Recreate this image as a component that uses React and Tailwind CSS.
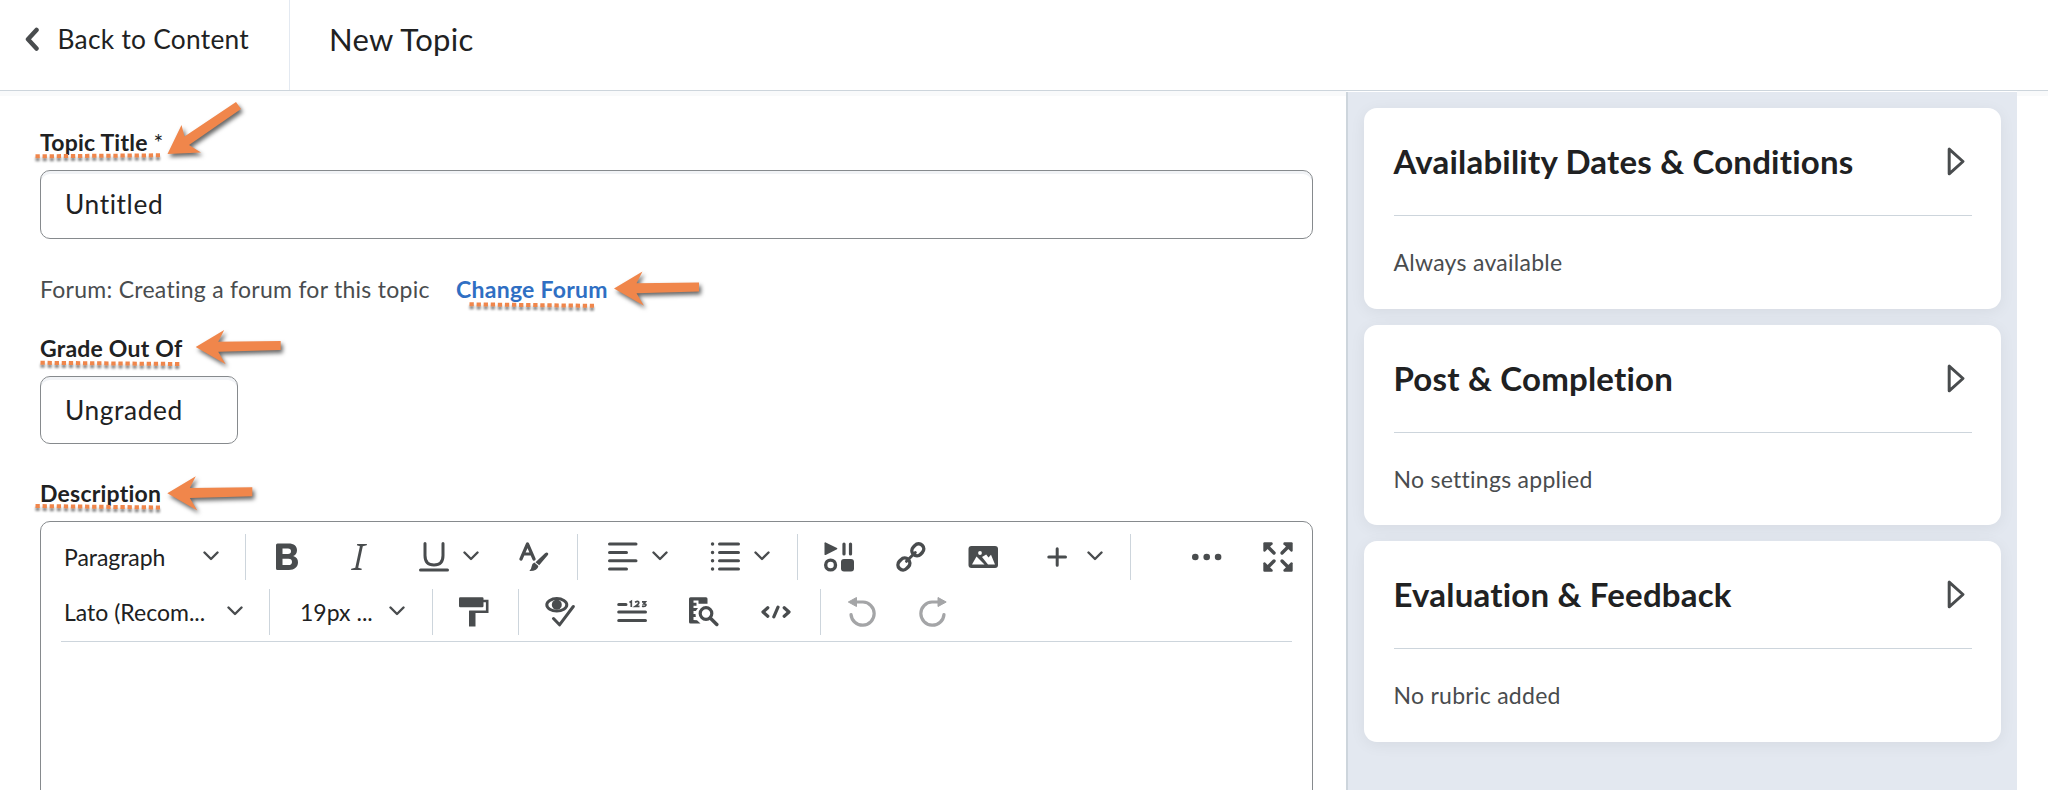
import React from "react";

const Icon = ({ className = "", w = 30, h = 30, children, color = "#494c4e" }) => (
  <svg className={"shrink-0 " + className} width={w} height={h} viewBox={`0 0 ${w} ${h}`} fill={color} stroke="none">
    {children}
  </svg>
);

const line = { fill: "none", stroke: "#494c4e", strokeWidth: 3, strokeLinecap: "round", strokeLinejoin: "round" };

const Chevron = ({ className = "" }) => (
  <Icon w={16} h={10} className={"-mt-[2px] " + className}>
    <path d="M1.5 1.5 8 8l6.5-6.5" {...line} strokeWidth={2.4} />
  </Icon>
);

const Sep = ({ className = "" }) => <span className={"h-[46px] w-px shrink-0 bg-[#cdd5dc] " + className} />;

const Label = ({ children, className = "" }) => (
  <div className={"h-[30px] whitespace-nowrap text-[23px] font-bold leading-[30px] tracking-[0.220px] text-[#202122] " + className}>{children}</div>
);

function ToolbarTop() {
  return (
    <div className="flex h-[46px] items-center pl-[23px]">
      <span className="w-[101px] shrink-0 whitespace-nowrap text-[23px] leading-[30px] tracking-[-0.050px]">Paragraph</span>
      <Chevron className="ml-[37.500px]" />
      <Sep className="ml-[26.500px]" />
      <Icon className="ml-[26px]">
        <path fillRule="evenodd" d="M5.500 1.500H16.500C22 1.500 25 4.200 25 8.300C25 11.200 23.500 13.200 21.200 14.100C24.300 15 26 17.200 26 20.300C26 25 22.500 28 17 28H5.500Q4 28 4 26.500V3Q4 1.500 5.500 1.500ZM10.500 6.500V12H16C18 12 19 11 19 9.200C19 7.500 18 6.500 16 6.500ZM10.500 16.800V23H16.500C18.800 23 20 22 20 19.900C20 17.900 18.800 16.800 16.500 16.800Z" />
      </Icon>
      <Icon className="ml-[42px]">
        <path d="M13.200 2H23L22.700 3.200L18.800 4.200L14.200 25.800L17.800 26.800L17.500 28H7L7.300 26.800L11.300 25.800L15.900 4.200L12.900 3.200Z" />
      </Icon>
      <Icon className="ml-[45px]">
        <path d="M6 1.500V13.500Q6 23 15 23Q24 23 24 13.500V1.500" {...line} />
        <path d="M1.500 28H28.500" {...line} />
      </Icon>
      <Chevron className="ml-[14px]" />
      <Icon className="ml-[40px]">
        <path d="M2 17 8.500 2 15 17M4.500 12H12.500" {...line} strokeWidth={3.2} />
        <path d="M27.400 10.600Q29.700 10.600 29.100 12.700L20.200 23.200L16.500 20.200L26 11.300ZM15.300 20.500L19.400 24Q18.600 29 11 29L10.500 28.500Q12.300 27.300 12.600 24.400Q12.900 21.400 15.300 20.500Z" />
      </Icon>
      <Sep className="ml-[28px]" />
      <Icon className="ml-[30px]">
        <path d="M1.500 2H28M1.500 10.500H18.500M1.500 18.700H28M1.500 27H18.500" {...line} />
      </Icon>
      <Chevron className="ml-[14px]" />
      <Icon className="ml-[42px]">
        <path d="M9.500 2H28.500M9.500 10.500H28.500M9.500 18.700H28.500M9.500 27H28.500" {...line} />
        <path d="M2.500 2h.1M2.500 10.500h.1M2.500 18.700h.1M2.500 27h.1" {...line} strokeWidth={3.400} />
      </Icon>
      <Chevron className="ml-[14px]" />
      <Sep className="ml-[27px]" />
      <Icon className="ml-[26px]">
        <path d="M.5 1.200Q.5 0 1.700.4L13 6.100Q13.800 6.700 13 7.300L1.700 13Q.5 13.300.5 12.200Z" />
        <path d="M20 2V12M26.500 2V12" {...line} strokeWidth={3.200} />
        <circle cx="6.600" cy="23" r="4.900" {...line} strokeWidth={3.400} />
        <rect x="17" y="17" width="13" height="12.500" rx="3" />
      </Icon>
      <Icon className="ml-[42px]">
        <g {...line} strokeWidth={3.500}>
          <rect x="-6.300" y="-5.100" width="12.600" height="10.200" rx="5.100" transform="translate(21.800 7.800) rotate(-46)" />
          <rect x="-6.300" y="-5.100" width="12.600" height="10.200" rx="5.100" transform="translate(7.900 22) rotate(-46)" />
          <path d="M10.500 19.300 19.300 10.500" strokeWidth={3} />
        </g>
      </Icon>
      <Icon className="ml-[42px]">
        <rect x=".5" y="4" width="29.500" height="22" rx="3" />
        <circle cx="12" cy="11" r="1.900" fill="#fff" />
        <path d="M4 22.500 8.500 14.500 16.500 22.500ZM14 15 18.200 12.500 20.500 15.500 23 12.800 27 22.500H20Z" fill="#fff" />
      </Icon>
      <Icon className="ml-[45px]">
        <path d="M5.800 15H22.500M14.200 6.700V23.200" {...line} />
      </Icon>
      <Chevron className="ml-[14px]" />
      <Sep className="ml-[27px]" />
      <Icon className="ml-[61px]">
        <circle cx="3.300" cy="15" r="3.300" />
        <circle cx="14.700" cy="15" r="3.300" />
        <circle cx="26.100" cy="15" r="3.300" />
      </Icon>
      <Icon className="ml-[41px]">
        {[0, 90, 180, 270].map((a) => (
          <g key={a} transform={`rotate(${a} 15 15)`}>
            <path d="M.3 1.500Q.3.300 1.500.300H8.700Q10.300.8 9.500 2.200L2.200 9.500Q.8 10.300.3 8.700Z" />
            <path d="M5 5 11 11" {...line} strokeWidth={3.400} />
          </g>
        ))}
      </Icon>
    </div>
  );
}

function ToolbarBottom() {
  const faded = { ...line, stroke: "#a4a5a7" };
  return (
    <div className="mt-[9px] flex h-[46px] items-center pl-[23px]">
      <span className="w-[142px] shrink-0 whitespace-nowrap text-[23px] leading-[30px]">Lato (Recom...</span>
      <Chevron className="ml-[21px]" />
      <Sep className="ml-[26px]" />
      <span className="ml-[30px] w-[75px] shrink-0 whitespace-nowrap text-[23px] leading-[30px]">19px ...</span>
      <Chevron className="ml-[14px]" />
      <Sep className="ml-[27px]" />
      <Icon className="ml-[26px]">
        <rect x="0" y=".3" width="24.500" height="10" rx="1.200" />
        <path d="M24 4H28.200V14.800H11.500V19" fill="none" stroke="#494c4e" strokeWidth="2.600" />
        <path d="M10 14H16.500V29.500H10Z" />
      </Icon>
      <Sep className="ml-[29px]" />
      <Icon className="ml-[26px]">
        <ellipse cx="11.800" cy="7.800" rx="10" ry="6.200" {...line} />
        <circle cx="11.800" cy="7.800" r="5" />
        <path d="M8.500 21.500 14.500 27.800 28.300 9.500" {...line} strokeWidth={3} />
      </Icon>
      <Icon className="ml-[42px]">
        <path d="M1.700 7.500H9M1.700 15H28.500M1.700 23.500H28.500" {...line} />
        <g fill="none" stroke="#494c4e" strokeWidth="1.700">
          <path d="M12.500 5.500 14.300 4.300V10M18 5.200Q21.800 3.300 21.800 5.800Q21.800 7 18.200 9.400H22.500M25 4.800H28.500L26.800 6.800Q29 6.800 29 8.100Q28.500 10 25 9.200" />
        </g>
      </Icon>
      <Icon className="ml-[42px]">
        <path d="M1.500.3H17Q18.500.3 18.500 1.800V6.800H9.500V3.600H4.500V5.800H7.500V8.800H4.500V11H9L6.800 14H4.500V17H6.500L6.800 20H4.500V23L8 23.300L11.500 26.500H1.500Q0 26.500 0 25V1.800Q0 .3 1.500.3Z" />
        <circle cx="17" cy="16.500" r="5.800" {...line} strokeWidth={3.200} />
        <path d="M21.500 21.300 27.800 27.500" {...line} strokeWidth={3.500} />
      </Icon>
      <Icon className="ml-[41.500px]">
        <path d="M6.800 10.700 2 15 6.800 19.300M23.200 10.700 28 15 23.200 19.300M17 10.200 12.800 19.800" {...line} strokeWidth={3.200} />
      </Icon>
      <Sep className="ml-[29.500px]" />
      <Icon className="ml-[27px]">
        <path d="M5 5H15A11.600 11.600 0 1 1 3 17.500" {...faded} strokeWidth={3.200} />
        <path d="M8.500.5V9.500L.3 5Z" fill="#a4a5a7" stroke="#a4a5a7" strokeLinejoin="round" />
      </Icon>
      <Icon className="ml-[40px]">
        <path d="M25 5H14A11.600 11.600 0 1 0 26 17.500" {...faded} strokeWidth={3.200} />
        <path d="M20 .5V9.500L28.200 5Z" fill="#a4a5a7" stroke="#a4a5a7" strokeLinejoin="round" />
      </Icon>
    </div>
  );
}

const Card = ({ title, text }) => (
  <section className="h-[200.500px] shrink-0 rounded-[13px] bg-white px-[29.500px] shadow-[0_3px_16px_rgba(0,0,0,0.06)]">
    <div className="flex h-[108px] items-start justify-between border-b border-[#cdd5dc] pt-[33px]">
      <h2 className="whitespace-nowrap text-[33px] font-bold leading-[40px] tracking-[0.210px]">{title}</h2>
      <svg className="mr-[6px] mt-[5px] shrink-0" width="19" height="31" viewBox="0 0 19 31">
        <path d="M2.200 3.200V27.800L16 15.500Z" fill="none" stroke="#494c4e" strokeWidth="3" strokeLinejoin="round" />
      </svg>
    </div>
    <p className="mt-[31px] whitespace-nowrap text-[23px] leading-[30px] tracking-[0.270px] text-[#494c4e]">{text}</p>
  </section>
);

const Arrow = ({ x, y }) => (
  <path transform={`translate(${x} ${y})`} d="M0 0 28.500-17 22.500-5.200 85-6V3L22.500 4.700 30 17.300Z" />
);

function Annotations() {
  return (
    <svg className="pointer-events-none absolute left-0 top-0" width="760" height="560" viewBox="0 0 760 560">
      <g
        fill="#f0864b"
        stroke="none"
        className="[filter:drop-shadow(2px_3px_2px_rgba(0,0,0,0.6))]"
      >
        <path d="M167.500 154 181.500 125 184.500 136.500 236 102 241 109 189 145 201 152.500Z" />
        <Arrow x={195.700} y={347} />
        <Arrow x={167.300} y={493.300} />
        <Arrow x={614} y={288.500} />
      </g>
      <g
        stroke="#f0864b"
        strokeWidth="4"
        strokeDasharray="4.300 2.780"
        className="[filter:drop-shadow(0px_3px_1px_rgba(0,0,0,0.45))]"
      >
        <path d="M35.500 156.300 160 155.300" />
        <path d="M40.500 362.800 180 364" />
        <path d="M35.500 506 160 507.500" />
        <path d="M469.500 304.300 594 305.800" />
      </g>
    </svg>
  );
}

export default function App() {
  return (
    <div className="relative flex h-[790px] w-[2048px] flex-col overflow-hidden bg-white font-['Lato',sans-serif] text-[#202122]">
      <header className="flex h-[91px] shrink-0 border-b border-[#cdd5dc]">
        <div className="flex w-[290px] shrink-0 border-r border-[#e3e9f1] pl-[24px]">
          <svg className="mt-[27px] shrink-0" width="16" height="25" viewBox="0 0 16 25">
            <path d="M12.500 3 4 12.300 12.500 21.500" fill="none" stroke="#494c4e" strokeWidth="4.500" strokeLinecap="round" strokeLinejoin="round" />
          </svg>
          <span className="ml-[17.500px] mt-[24px] whitespace-nowrap text-[26.300px] leading-[30px] tracking-[0.280px]">Back to Content</span>
        </div>
        <h1 className="ml-[39px] mt-[19px] whitespace-nowrap text-[31px] leading-[40px] tracking-[0.300px]">New Topic</h1>
      </header>
      <div className="flex min-h-0 flex-1">
        <main className="w-[1346px] shrink-0 bg-[linear-gradient(#f9fafb_0_5px,#ffffff_5px)] pl-[40px] pt-[36px]">
          <Label>
            Topic Title <span className="font-normal leading-none">*</span>
          </Label>
          <div className="mt-[13px] flex h-[69px] w-[1273px] items-center rounded-[10px] border border-[#868a8d] pb-[1px] pl-[24px] text-[26.300px] leading-[30px] tracking-[0.600px] shadow-[inset_0_3px_0_#f1f3f6]">
            Untitled
          </div>
          <div className="mt-[35px] flex whitespace-nowrap text-[23px] leading-[30px]">
            <span className="w-[416px] tracking-[0.270px] text-[#494c4e]">Forum: Creating a forum for this topic</span>
            <a className="font-bold tracking-[0.270px] text-[#2f6fc3]">Change Forum</a>
          </div>
          <Label className="mt-[29px]">Grade Out Of</Label>
          <div className="mt-[13px] flex h-[68px] w-[198px] items-center rounded-[10px] border border-[#868a8d] pl-[24px] text-[26.300px] leading-[30px] tracking-[0.600px] shadow-[inset_0_3px_0_#f1f3f6]">
            Ungraded
          </div>
          <Label className="mt-[34px]">Description</Label>
          <div className="mt-[13px] h-[300px] w-[1273px] rounded-[10px] border border-[#868a8d] pt-[12px]">
            <ToolbarTop />
            <ToolbarBottom />
            <div className="mx-[20px] mt-[6px] h-px bg-[#cdd5dc]" />
          </div>
        </main>
        <aside className="mt-px flex w-[671px] shrink-0 flex-col gap-[16.200px] border-l-2 border-[#cdd5dc] bg-[#e3e8f0] pl-[16px] pr-[16px] pt-[16px]">
          <Card title="Availability Dates & Conditions" text="Always available" />
          <Card title="Post & Completion" text="No settings applied" />
          <Card title="Evaluation & Feedback" text="No rubric added" />
        </aside>
        <div className="flex-1 bg-[linear-gradient(#f9fafb_0_5px,#ffffff_5px)]" />
      </div>
      <Annotations />
    </div>
  );
}
